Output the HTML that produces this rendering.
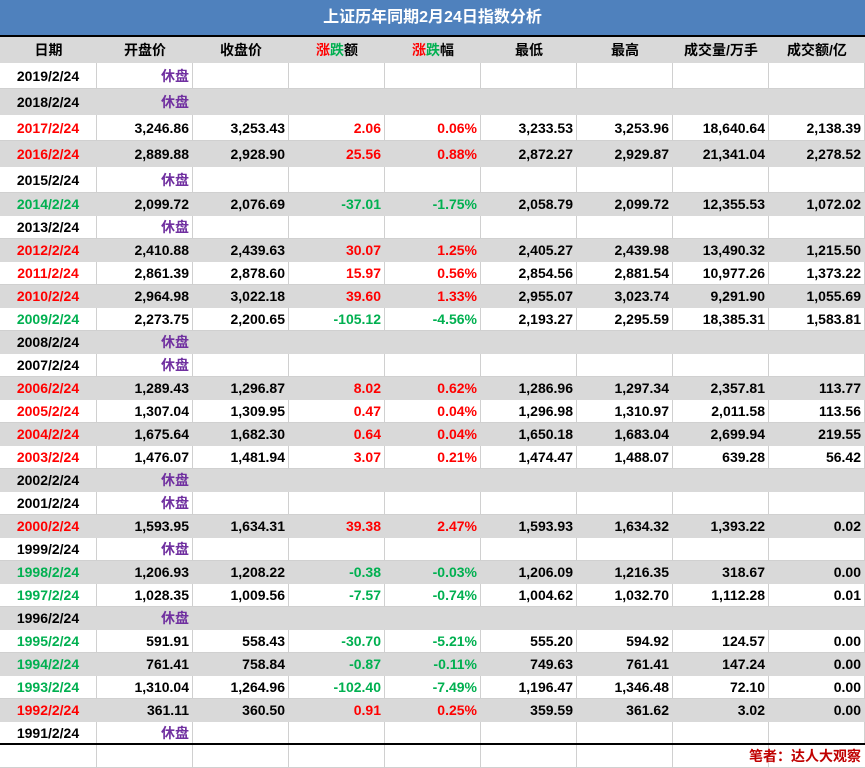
<!DOCTYPE html>
<html><head><meta charset="utf-8">
<style>
*{margin:0;padding:0;box-sizing:border-box}
body{width:865px;height:768px;background:#fff;font-family:"Liberation Sans","Noto Sans CJK SC",sans-serif;font-weight:bold;font-size:14px;color:#000;overflow:hidden;position:relative}
.title{position:absolute;left:0;top:0;width:865px;height:35px;background:#4f81bd;color:#fff;font-size:16px;text-align:center;line-height:35px;border-bottom:2px solid #000;height:37px}
.hdr{position:absolute;left:0;top:37px;width:865px;height:26px;background:#d9d9d9;display:flex}
.hdr div{text-align:center;line-height:26px}
.row{display:flex;height:23px;line-height:23px}
.row.t{height:26px;line-height:26px}
.row.g{background:#d9d9d9}
.row div{border-right:1px solid #d0d0d0;border-bottom:1px solid #d0d0d0;text-align:right;padding-right:3px;white-space:nowrap}
.row.g div{border-color:#d9d9d9}
.row div:first-child{text-align:center;padding-right:0}
.c0{width:97px}.c{width:96px}.cl{width:96px}
#body{position:absolute;left:0;top:63px;width:865px}
.r{color:#ff0000}.gr{color:#00b050}.p{color:#7030a0}
.line{position:absolute;left:0;top:743px;width:865px;height:2px;background:#000}
.foot{position:absolute;left:0;top:745px;width:865px;height:23px;display:flex}
.foot div{border-right:1px solid #d0d0d0;border-bottom:1px solid #d0d0d0;height:23px}
.ft{position:absolute;right:4px;top:745px;line-height:22px;color:#c00000;font-size:14px}
</style></head><body>
<div class="title">上证历年同期2月24日指数分析</div>
<div class="hdr">
<div class="c0">日期</div><div class="c">开盘价</div><div class="c">收盘价</div><div class="c"><span class="r">涨</span><span class="gr">跌</span>额</div><div class="c"><span class="r">涨</span><span class="gr">跌</span>幅</div><div class="c">最低</div><div class="c">最高</div><div class="c">成交量/万手</div><div class="c">成交额/亿</div>
</div>
<div id="body">
<div class="row t"><div class="c0">2019/2/24</div><div class="c p">休盘</div><div class="c"></div><div class="c"></div><div class="c"></div><div class="c"></div><div class="c"></div><div class="c"></div><div class="c"></div></div>
<div class="row t g"><div class="c0">2018/2/24</div><div class="c p">休盘</div><div class="c"></div><div class="c"></div><div class="c"></div><div class="c"></div><div class="c"></div><div class="c"></div><div class="c"></div></div>
<div class="row t"><div class="c0 r">2017/2/24</div><div class="c">3,246.86</div><div class="c">3,253.43</div><div class="c r">2.06</div><div class="c r">0.06%</div><div class="c">3,233.53</div><div class="c">3,253.96</div><div class="c">18,640.64</div><div class="c">2,138.39</div></div>
<div class="row t g"><div class="c0 r">2016/2/24</div><div class="c">2,889.88</div><div class="c">2,928.90</div><div class="c r">25.56</div><div class="c r">0.88%</div><div class="c">2,872.27</div><div class="c">2,929.87</div><div class="c">21,341.04</div><div class="c">2,278.52</div></div>
<div class="row t"><div class="c0">2015/2/24</div><div class="c p">休盘</div><div class="c"></div><div class="c"></div><div class="c"></div><div class="c"></div><div class="c"></div><div class="c"></div><div class="c"></div></div>
<div class="row g"><div class="c0 gr">2014/2/24</div><div class="c">2,099.72</div><div class="c">2,076.69</div><div class="c gr">-37.01</div><div class="c gr">-1.75%</div><div class="c">2,058.79</div><div class="c">2,099.72</div><div class="c">12,355.53</div><div class="c">1,072.02</div></div>
<div class="row"><div class="c0">2013/2/24</div><div class="c p">休盘</div><div class="c"></div><div class="c"></div><div class="c"></div><div class="c"></div><div class="c"></div><div class="c"></div><div class="c"></div></div>
<div class="row g"><div class="c0 r">2012/2/24</div><div class="c">2,410.88</div><div class="c">2,439.63</div><div class="c r">30.07</div><div class="c r">1.25%</div><div class="c">2,405.27</div><div class="c">2,439.98</div><div class="c">13,490.32</div><div class="c">1,215.50</div></div>
<div class="row"><div class="c0 r">2011/2/24</div><div class="c">2,861.39</div><div class="c">2,878.60</div><div class="c r">15.97</div><div class="c r">0.56%</div><div class="c">2,854.56</div><div class="c">2,881.54</div><div class="c">10,977.26</div><div class="c">1,373.22</div></div>
<div class="row g"><div class="c0 r">2010/2/24</div><div class="c">2,964.98</div><div class="c">3,022.18</div><div class="c r">39.60</div><div class="c r">1.33%</div><div class="c">2,955.07</div><div class="c">3,023.74</div><div class="c">9,291.90</div><div class="c">1,055.69</div></div>
<div class="row"><div class="c0 gr">2009/2/24</div><div class="c">2,273.75</div><div class="c">2,200.65</div><div class="c gr">-105.12</div><div class="c gr">-4.56%</div><div class="c">2,193.27</div><div class="c">2,295.59</div><div class="c">18,385.31</div><div class="c">1,583.81</div></div>
<div class="row g"><div class="c0">2008/2/24</div><div class="c p">休盘</div><div class="c"></div><div class="c"></div><div class="c"></div><div class="c"></div><div class="c"></div><div class="c"></div><div class="c"></div></div>
<div class="row"><div class="c0">2007/2/24</div><div class="c p">休盘</div><div class="c"></div><div class="c"></div><div class="c"></div><div class="c"></div><div class="c"></div><div class="c"></div><div class="c"></div></div>
<div class="row g"><div class="c0 r">2006/2/24</div><div class="c">1,289.43</div><div class="c">1,296.87</div><div class="c r">8.02</div><div class="c r">0.62%</div><div class="c">1,286.96</div><div class="c">1,297.34</div><div class="c">2,357.81</div><div class="c">113.77</div></div>
<div class="row"><div class="c0 r">2005/2/24</div><div class="c">1,307.04</div><div class="c">1,309.95</div><div class="c r">0.47</div><div class="c r">0.04%</div><div class="c">1,296.98</div><div class="c">1,310.97</div><div class="c">2,011.58</div><div class="c">113.56</div></div>
<div class="row g"><div class="c0 r">2004/2/24</div><div class="c">1,675.64</div><div class="c">1,682.30</div><div class="c r">0.64</div><div class="c r">0.04%</div><div class="c">1,650.18</div><div class="c">1,683.04</div><div class="c">2,699.94</div><div class="c">219.55</div></div>
<div class="row"><div class="c0 r">2003/2/24</div><div class="c">1,476.07</div><div class="c">1,481.94</div><div class="c r">3.07</div><div class="c r">0.21%</div><div class="c">1,474.47</div><div class="c">1,488.07</div><div class="c">639.28</div><div class="c">56.42</div></div>
<div class="row g"><div class="c0">2002/2/24</div><div class="c p">休盘</div><div class="c"></div><div class="c"></div><div class="c"></div><div class="c"></div><div class="c"></div><div class="c"></div><div class="c"></div></div>
<div class="row"><div class="c0">2001/2/24</div><div class="c p">休盘</div><div class="c"></div><div class="c"></div><div class="c"></div><div class="c"></div><div class="c"></div><div class="c"></div><div class="c"></div></div>
<div class="row g"><div class="c0 r">2000/2/24</div><div class="c">1,593.95</div><div class="c">1,634.31</div><div class="c r">39.38</div><div class="c r">2.47%</div><div class="c">1,593.93</div><div class="c">1,634.32</div><div class="c">1,393.22</div><div class="c">0.02</div></div>
<div class="row"><div class="c0">1999/2/24</div><div class="c p">休盘</div><div class="c"></div><div class="c"></div><div class="c"></div><div class="c"></div><div class="c"></div><div class="c"></div><div class="c"></div></div>
<div class="row g"><div class="c0 gr">1998/2/24</div><div class="c">1,206.93</div><div class="c">1,208.22</div><div class="c gr">-0.38</div><div class="c gr">-0.03%</div><div class="c">1,206.09</div><div class="c">1,216.35</div><div class="c">318.67</div><div class="c">0.00</div></div>
<div class="row"><div class="c0 gr">1997/2/24</div><div class="c">1,028.35</div><div class="c">1,009.56</div><div class="c gr">-7.57</div><div class="c gr">-0.74%</div><div class="c">1,004.62</div><div class="c">1,032.70</div><div class="c">1,112.28</div><div class="c">0.01</div></div>
<div class="row g"><div class="c0">1996/2/24</div><div class="c p">休盘</div><div class="c"></div><div class="c"></div><div class="c"></div><div class="c"></div><div class="c"></div><div class="c"></div><div class="c"></div></div>
<div class="row"><div class="c0 gr">1995/2/24</div><div class="c">591.91</div><div class="c">558.43</div><div class="c gr">-30.70</div><div class="c gr">-5.21%</div><div class="c">555.20</div><div class="c">594.92</div><div class="c">124.57</div><div class="c">0.00</div></div>
<div class="row g"><div class="c0 gr">1994/2/24</div><div class="c">761.41</div><div class="c">758.84</div><div class="c gr">-0.87</div><div class="c gr">-0.11%</div><div class="c">749.63</div><div class="c">761.41</div><div class="c">147.24</div><div class="c">0.00</div></div>
<div class="row"><div class="c0 gr">1993/2/24</div><div class="c">1,310.04</div><div class="c">1,264.96</div><div class="c gr">-102.40</div><div class="c gr">-7.49%</div><div class="c">1,196.47</div><div class="c">1,346.48</div><div class="c">72.10</div><div class="c">0.00</div></div>
<div class="row g"><div class="c0 r">1992/2/24</div><div class="c">361.11</div><div class="c">360.50</div><div class="c r">0.91</div><div class="c r">0.25%</div><div class="c">359.59</div><div class="c">361.62</div><div class="c">3.02</div><div class="c">0.00</div></div>
<div class="row"><div class="c0">1991/2/24</div><div class="c p">休盘</div><div class="c"></div><div class="c"></div><div class="c"></div><div class="c"></div><div class="c"></div><div class="c"></div><div class="c"></div></div>
</div>
<div class="line"></div>
<div class="foot"><div class="c0"></div><div class="c"></div><div class="c"></div><div class="c"></div><div class="c"></div><div class="c"></div><div class="c"></div><div class="c"></div><div class="c" style="border-right:none"></div></div>
<div class="ft">笔者：达人大观察</div>
</body></html>
